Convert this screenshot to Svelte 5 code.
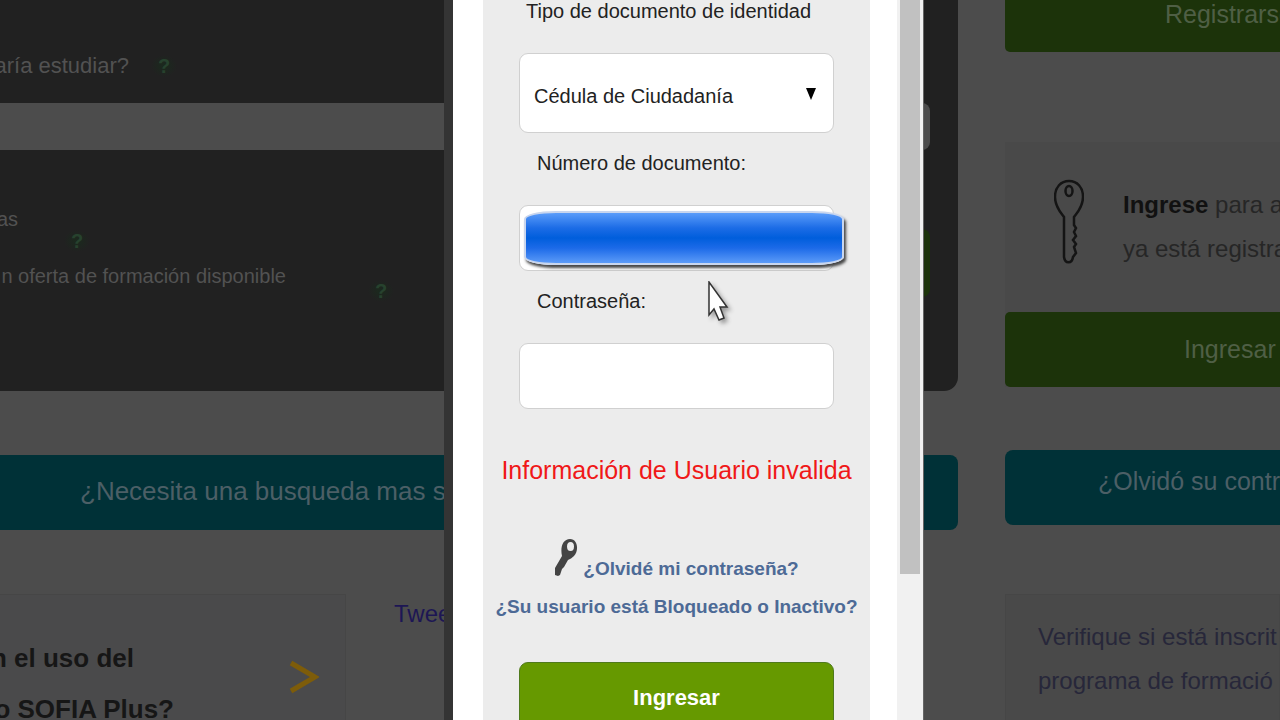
<script lang="ts">
	let documentType = $state('cc');
	let documentNumber = $state('');
	let password = $state('');
</script>

{#snippet help()}
	<button class="help" type="button" aria-label="Ayuda">?</button>
{/snippet}

<div class="page">
	<main class="main">
		<section class="search">
			<div class="question">
				<label class="clip clip--question" for="program"><span>aría estudiar?</span></label>
				{@render help()}
			</div>
			<input class="search__input" id="program" type="text" />
			<div class="filters">
				<div class="filters__list">
					<div class="filter filter--first">
						<span class="clip clip--short"><span>as</span></span>
						{@render help()}
					</div>
					<div class="filter filter--second">
						<span class="clip clip--long"><span>n oferta de formación disponible</span></span>
						{@render help()}
					</div>
				</div>
				<button class="search__submit" type="button" aria-label="Buscar"></button>
			</div>
		</section>

		<a class="bar bar--main" href="#busqueda">¿Necesita una busqueda mas s</a>

		<div class="below">
			<a class="guide" href="#guia">
				<span class="guide__text">
					<span class="clip clip--guide-top"><span>n el uso del</span></span>
					<span class="clip clip--guide-bottom"><span>o SOFIA Plus?</span></span>
				</span>
				<svg class="chevron" viewBox="0 0 30 34" aria-hidden="true">
					<path d="M2 3 L26 17 L2 31" fill="none" stroke="#7d5c0a" stroke-width="5" />
				</svg>
			</a>
			<a class="tweets" href="#tweets">Tweets</a>
		</div>
	</main>

	<aside class="side">
		<button class="side__button side__button--register" type="button">Registrarse</button>
		<section class="enter">
			<div class="enter__info">
				<svg class="enter__key" viewBox="0 0 30 86" aria-hidden="true">
					<g fill="none" stroke="#141414" stroke-width="2.5">
						<path
							d="M10 38 C7 34 1 28 1 18 C1 8 7 2 15 2 C23 2 29 8 29 18 C29 28 23 34 20 38 L20 46 L22 49 L20 53 L22 57 L19 61 L22 65 L20 68 L22 74 L19 78 C18 85 11 85 10 78 Z"
						/>
						<ellipse cx="15" cy="12" rx="3.5" ry="5" />
					</g>
				</svg>
				<p class="enter__text"><strong>Ingrese</strong> para a<br />ya está registra</p>
			</div>
			<button class="side__button side__button--enter" type="button">Ingresar</button>
		</section>
		<a class="bar bar--side" href="#contrasena">¿Olvidó su contr</a>
		<p class="verify">Verifique si está inscrit<br />programa de formació</p>
	</aside>
</div>

<div class="overlay">
	<div class="dialog" role="dialog" aria-label="Ingresar">
		<form class="login">
			<label class="login__label login__label--type" for="doc-type">Tipo de documento de identidad</label>
			<div class="select">
				<select id="doc-type" bind:value={documentType}>
					<option value="cc">Cédula de Ciudadanía</option>
				</select>
				<svg class="select__arrow" viewBox="0 0 10 12" aria-hidden="true">
					<path d="M0 0 H10 L5 12 Z" fill="#000" />
				</svg>
			</div>

			<label class="login__label" for="doc-number">Número de documento:</label>
			<div class="field">
				<input id="doc-number" type="text" bind:value={documentNumber} />
				<div class="cover"></div>
			</div>

			<label class="login__label" for="password">Contraseña:</label>
			<div class="field">
				<input id="password" type="password" bind:value={password} />
				<svg class="pointer" viewBox="0 0 28 44" aria-hidden="true">
					<path
						d="M2 1 V34 L7 28 L12 39 L17 37 L13 26 H20 Z"
						fill="#fff"
						stroke="#333"
						stroke-width="1.5"
					/>
				</svg>
			</div>

			<p class="error">Información de Usuario invalida</p>

			<div class="links">
				<a href="#olvide">
					<svg class="links__key" viewBox="0 0 24 40" aria-hidden="true">
						<path
							d="M8 18 C6 9 9 1 16 1 C24 1 25 13 20 18 C18 20 16 21 14 22 L10 29 L8 31 L6 37 L4 38 L1 37 L1 30 Z"
							fill="#444"
						/>
						<ellipse cx="16.5" cy="8.5" rx="3.5" ry="4.5" fill="#ececec" />
					</svg>¿Olvidé mi contraseña?
				</a>
				<a href="#bloqueado">¿Su usuario está Bloqueado o Inactivo?</a>
			</div>

			<button class="login__submit" type="button">Ingresar</button>
		</form>
		<div class="scrollbar"><div class="scrollbar__thumb"></div></div>
	</div>
</div>

<style>
	:global(body) {
		background: #4c4c4c;
		overflow: hidden;
		font-family: 'Liberation Sans', Arial, sans-serif;
	}

	button,
	input,
	select {
		font-family: inherit;
		box-sizing: border-box;
	}

	a {
		text-decoration: none;
	}

	p {
		margin: 0;
	}

	.page {
		display: grid;
		grid-template-columns: minmax(0, 958fr) minmax(0, 275fr);
		gap: 47px;
		height: 100vh;
		overflow: hidden;
	}

	/* ── Search panel ── */
	.search {
		box-sizing: border-box;
		height: 391px;
		padding: 46px 28px 0 0;
		background: #212121;
		border-radius: 0 0 14px 0;
		color: #525252;
	}

	.clip {
		display: flex;
		justify-content: flex-end;
		flex-shrink: 0;
		overflow: hidden;
		white-space: nowrap;
	}
	.clip--question { width: 129px; }
	.clip--short { width: 18px; }
	.clip--long { width: 286px; }
	.clip--guide-top { width: 134px; }
	.clip--guide-bottom { width: 174px; }

	.question {
		display: flex;
		align-items: center;
		gap: 22px;
		height: 40px;
		font-size: 22px;
	}

	.help {
		width: 26px;
		height: 22px;
		padding: 0;
		border: 0;
		background: radial-gradient(closest-side, #1a2a1d, #212121);
		color: #27422e;
		font-size: 20px;
		font-weight: 700;
		line-height: 22px;
	}

	.search__input {
		display: block;
		width: 100%;
		height: 47px;
		margin-top: 17px;
		border: 0;
		border-radius: 0 8px 8px 0;
		background: #4c4c4c;
	}

	.filters {
		display: flex;
		justify-content: space-between;
		margin-top: 55px;
		font-size: 20px;
		line-height: 28px;
	}
	.filters__list {
		display: flex;
		flex-direction: column;
		gap: 10px;
	}
	.filter { display: flex; }
	.filter .help { align-self: flex-end; }
	.filter--first { height: 47px; gap: 46px; }
	.filter--second { height: 40px; gap: 82px; }

	.search__submit {
		width: 160px;
		height: 68px;
		margin-top: 24px;
		border: 0;
		border-radius: 8px;
		background: #1c330a;
	}

	/* ── Teal bars ── */
	.bar {
		display: block;
		height: 75px;
		background: #003137;
		color: #4c5f66;
		font-size: 26px;
		line-height: 73px;
		white-space: nowrap;
		overflow: hidden;
	}
	.bar--main {
		margin-top: 64px;
		padding-left: 80px;
		border-radius: 0 8px 8px 0;
	}
	.bar--side {
		margin-top: 63px;
		padding-left: 93px;
		border-radius: 8px 0 0 8px;
		font-size: 25px;
		line-height: 62px;
	}

	/* ── Guide card and tweets ── */
	.below {
		display: flex;
		gap: 48px;
		margin-top: 64px;
	}
	.guide {
		display: flex;
		justify-content: space-between;
		box-sizing: border-box;
		width: 346px;
		padding: 38px 26px 0 0;
		border: 1px solid #464646;
		border-left: 0;
		background: #4a4a4b;
		color: #161616;
		font-size: 26px;
		font-weight: 700;
		line-height: 51px;
	}
	.chevron {
		width: 30px;
		height: 34px;
		margin-top: 27px;
	}
	.tweets {
		color: #1d1654;
		font-size: 24px;
		line-height: 40px;
	}

	/* ── Side column ── */
	.side {
		white-space: nowrap;
		overflow: hidden;
	}
	.side__button {
		display: block;
		width: 100%;
		border: 0;
		background: #1c330a;
		color: #4f5f45;
		font-size: 25px;
		text-align: left;
		overflow: hidden;
	}
	.side__button--register {
		height: 52px;
		padding: 0 0 24px 160px;
		border-radius: 0 0 0 5px;
		line-height: 28px;
	}
	.side__button--enter {
		height: 75px;
		padding: 0 0 0 179px;
		border-radius: 5px 0 0 5px;
	}
	.enter {
		margin-top: 90px;
		background: #494949;
	}
	.enter__info {
		display: flex;
		gap: 39px;
		box-sizing: border-box;
		height: 170px;
		padding: 37px 0 0 49px;
	}
	.enter__key {
		flex-shrink: 0;
		width: 30px;
		height: 86px;
	}
	.enter__text {
		margin-top: 4px;
		color: #262626;
		font-size: 24px;
		line-height: 44px;
	}
	.enter__text strong { color: #111; }
	.verify {
		height: 160px;
		margin-top: 69px;
		padding: 20px 0 0 32px;
		border: 1px solid #464646;
		background: #494949;
		color: #27273a;
		font-size: 24px;
		line-height: 44px;
	}

	/* ── Login dialog ── */
	.overlay {
		position: fixed;
		inset: 0;
		display: flex;
		justify-content: center;
		padding-left: 88px;
	}
	.dialog {
		display: flex;
		box-sizing: border-box;
		width: 480px;
		border-left: 9px solid #343434;
		border-right: 1px solid #666;
		background: #fff;
		overflow: hidden;
	}
	.login {
		box-sizing: border-box;
		width: 387px;
		height: 760px;
		margin: 0 27px 0 30px;
		padding: 0 36px;
		background: #ececec;
		color: #222;
	}
	.login__label {
		display: block;
		margin-top: 19px;
		padding-left: 18px;
		font-size: 20px;
		line-height: 22px;
		white-space: nowrap;
	}
	.login__label--type {
		margin-top: 0;
		padding-left: 7px;
	}

	.select,
	.field {
		position: relative;
		margin-top: 31px;
	}
	.select select,
	.field input {
		display: block;
		width: 100%;
		height: 66px;
		padding: 0 14px;
		border: 1px solid #d0d0d0;
		border-radius: 9px;
		background: #fff;
		color: #222;
		font-size: 20px;
	}
	.select select {
		height: 80px;
		padding-top: 6px;
		appearance: none;
	}
	.select__arrow {
		position: absolute;
		top: 35px;
		right: 18px;
		width: 10px;
		height: 12px;
	}

	.cover {
		position: absolute;
		top: 6px;
		left: 5px;
		right: -10px;
		height: 54px;
		box-sizing: border-box;
		border: 2px solid #c9d6ee;
		border-radius: 32px / 8px;
		background: linear-gradient(#5a9cfa, #1c6ce6 30%, #005edc 50%, #1c6ae8 70%, #5c9bf8);
		box-shadow: 2px 3px 3px #444;
	}
	.pointer {
		position: absolute;
		top: -62px;
		left: 188px;
		width: 28px;
		height: 44px;
		filter: drop-shadow(3px 3px 2px #999);
	}

	.error {
		display: flex;
		justify-content: center;
		margin-top: 44px;
		color: #f01818;
		font-size: 25px;
		line-height: 34px;
		white-space: nowrap;
	}

	.links {
		display: flex;
		flex-direction: column;
		align-items: center;
		margin-top: 63px;
		font-size: 19px;
		font-weight: 700;
		line-height: 38px;
		white-space: nowrap;
	}
	.links a {
		display: flex;
		gap: 5px;
		color: #4d6a96;
	}
	.links__key {
		width: 24px;
		height: 40px;
		margin: -12px 0 0;
	}

	.login__submit {
		display: block;
		width: 100%;
		height: 72px;
		margin-top: 36px;
		border: 1px solid #4f7a1c;
		border-radius: 9px;
		background: #669900;
		color: #fff;
		font-size: 22px;
		font-weight: 700;
	}

	.scrollbar {
		flex: 1;
		padding: 0 3px;
		background: #f1f1f1;
	}
	.scrollbar__thumb {
		height: 574px;
		background: #c1c1c1;
	}
</style>
